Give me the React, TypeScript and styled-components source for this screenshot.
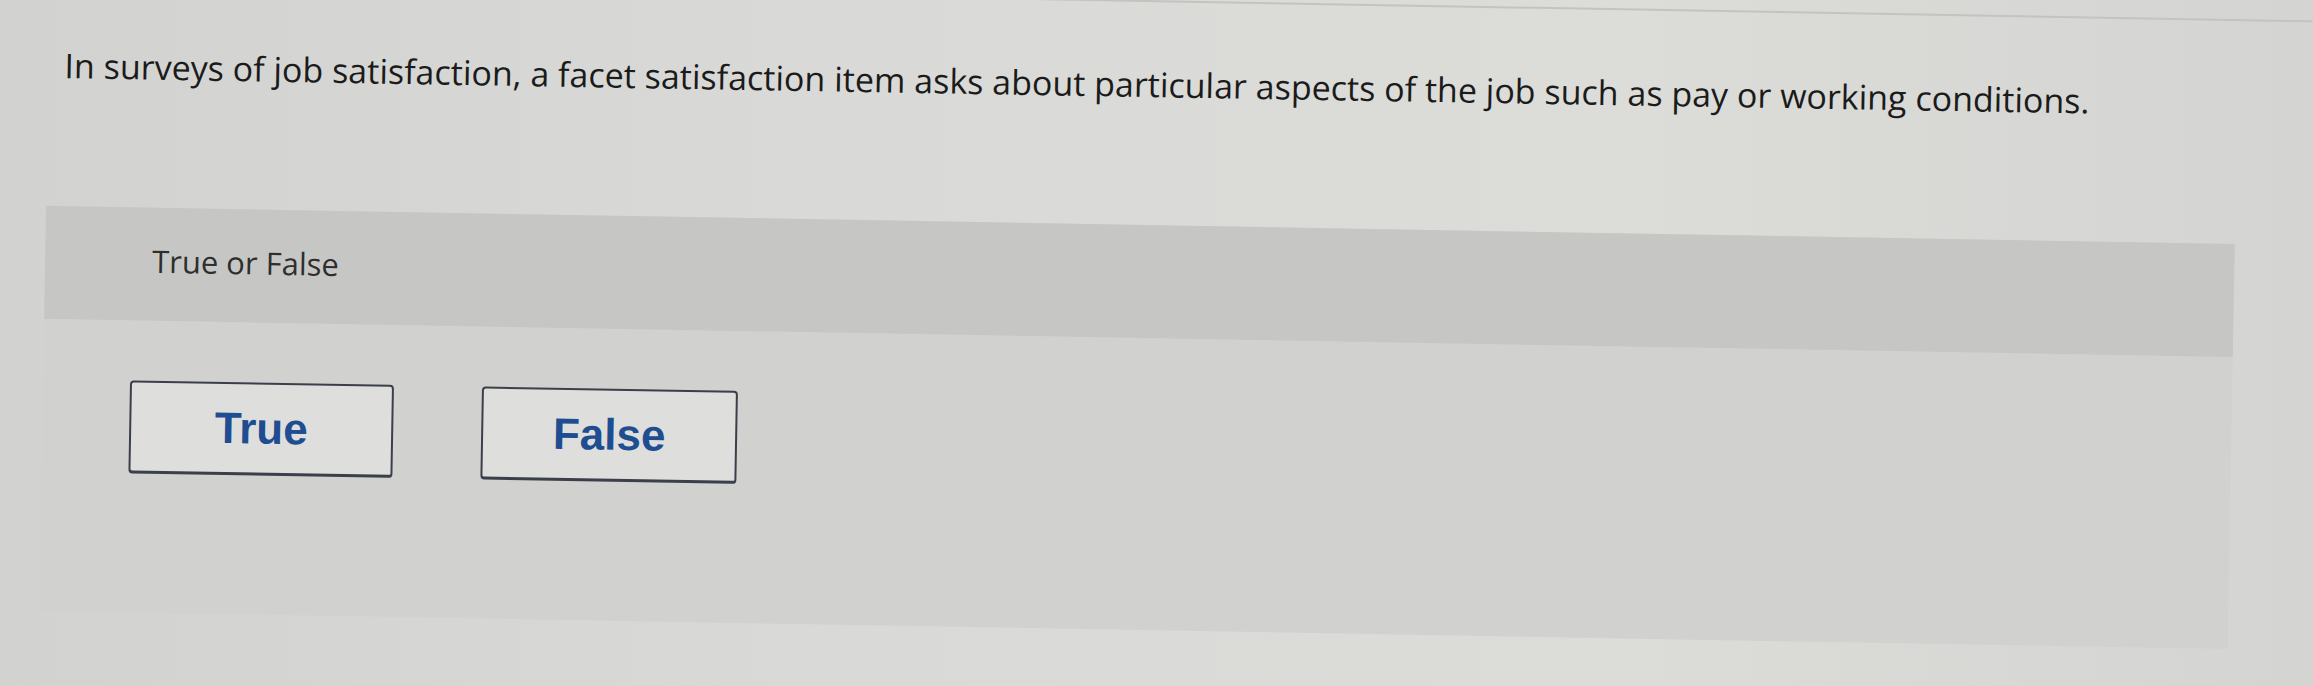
import { FC } from 'react';
import styled, { createGlobalStyle } from 'styled-components';

const GlobalStyle = createGlobalStyle`
  html, body {
    margin: 0;
    padding: 0;
    height: 100%;
    overflow: hidden;
  }
  body {
    background: linear-gradient(90deg, #d2d3d0 0%, #d9dad7 35%, #dcdcd9 70%, #d4d5d2 100%);
    font-family: 'Open Sans', Lato, sans-serif;
  }
`;

// slight tilt of the whole sheet
const Sheet = styled.div`
  width: 2313px;
  box-sizing: border-box;
  border-top: 2px solid #c3c3c0;
  padding: 62px 74px 0 50px;
  transform: translateY(-20px) rotate(1deg);
  transform-origin: 0 0;
`;

const Question = styled.p`
  margin: 0 0 121px 16px;
  font-size: 34px;
  font-weight: 500;
  line-height: 40px;
  color: #1b1b1b;
  white-space: nowrap;
`;

const Panel = styled.section`
  background: #d1d2cf;
  height: 405px;
  box-sizing: border-box;
`;

const PanelHeader = styled.div`
  height: 113px;
  box-sizing: border-box;
  padding: 35px 0 0 107px;
  background: #c6c7c5;
  font-size: 31px;
  line-height: 36px;
  color: #2e2e2e;
`;

const Choices = styled.div`
  display: flex;
  gap: 88px;
  padding: 60px 0 0 87px;
`;

const ChoiceButton = styled.button<{ $width: number }>`
  width: ${(p) => p.$width}px;
  height: 93px;
  display: flex;
  align-items: center;
  justify-content: center;
  background: #dedfdc;
  border: 2px solid #3a3f4a;
  border-bottom-width: 3px;
  border-radius: 4px;
  font-family: 'Liberation Sans', Arial, sans-serif;
  font-weight: 700;
  font-size: 44px;
  color: #1f4d92;
  cursor: pointer;
`;

const App: FC = () => (
  <>
    <GlobalStyle />
    <Sheet>
      <Question>
        In surveys of job satisfaction, a facet satisfaction item asks about particular aspects of the job such as pay
        or working conditions.
      </Question>
      <Panel>
        <PanelHeader>True or False</PanelHeader>
        <Choices>
          <ChoiceButton $width={264}>True</ChoiceButton>
          <ChoiceButton $width={256}>False</ChoiceButton>
        </Choices>
      </Panel>
    </Sheet>
  </>
);

export default App;
